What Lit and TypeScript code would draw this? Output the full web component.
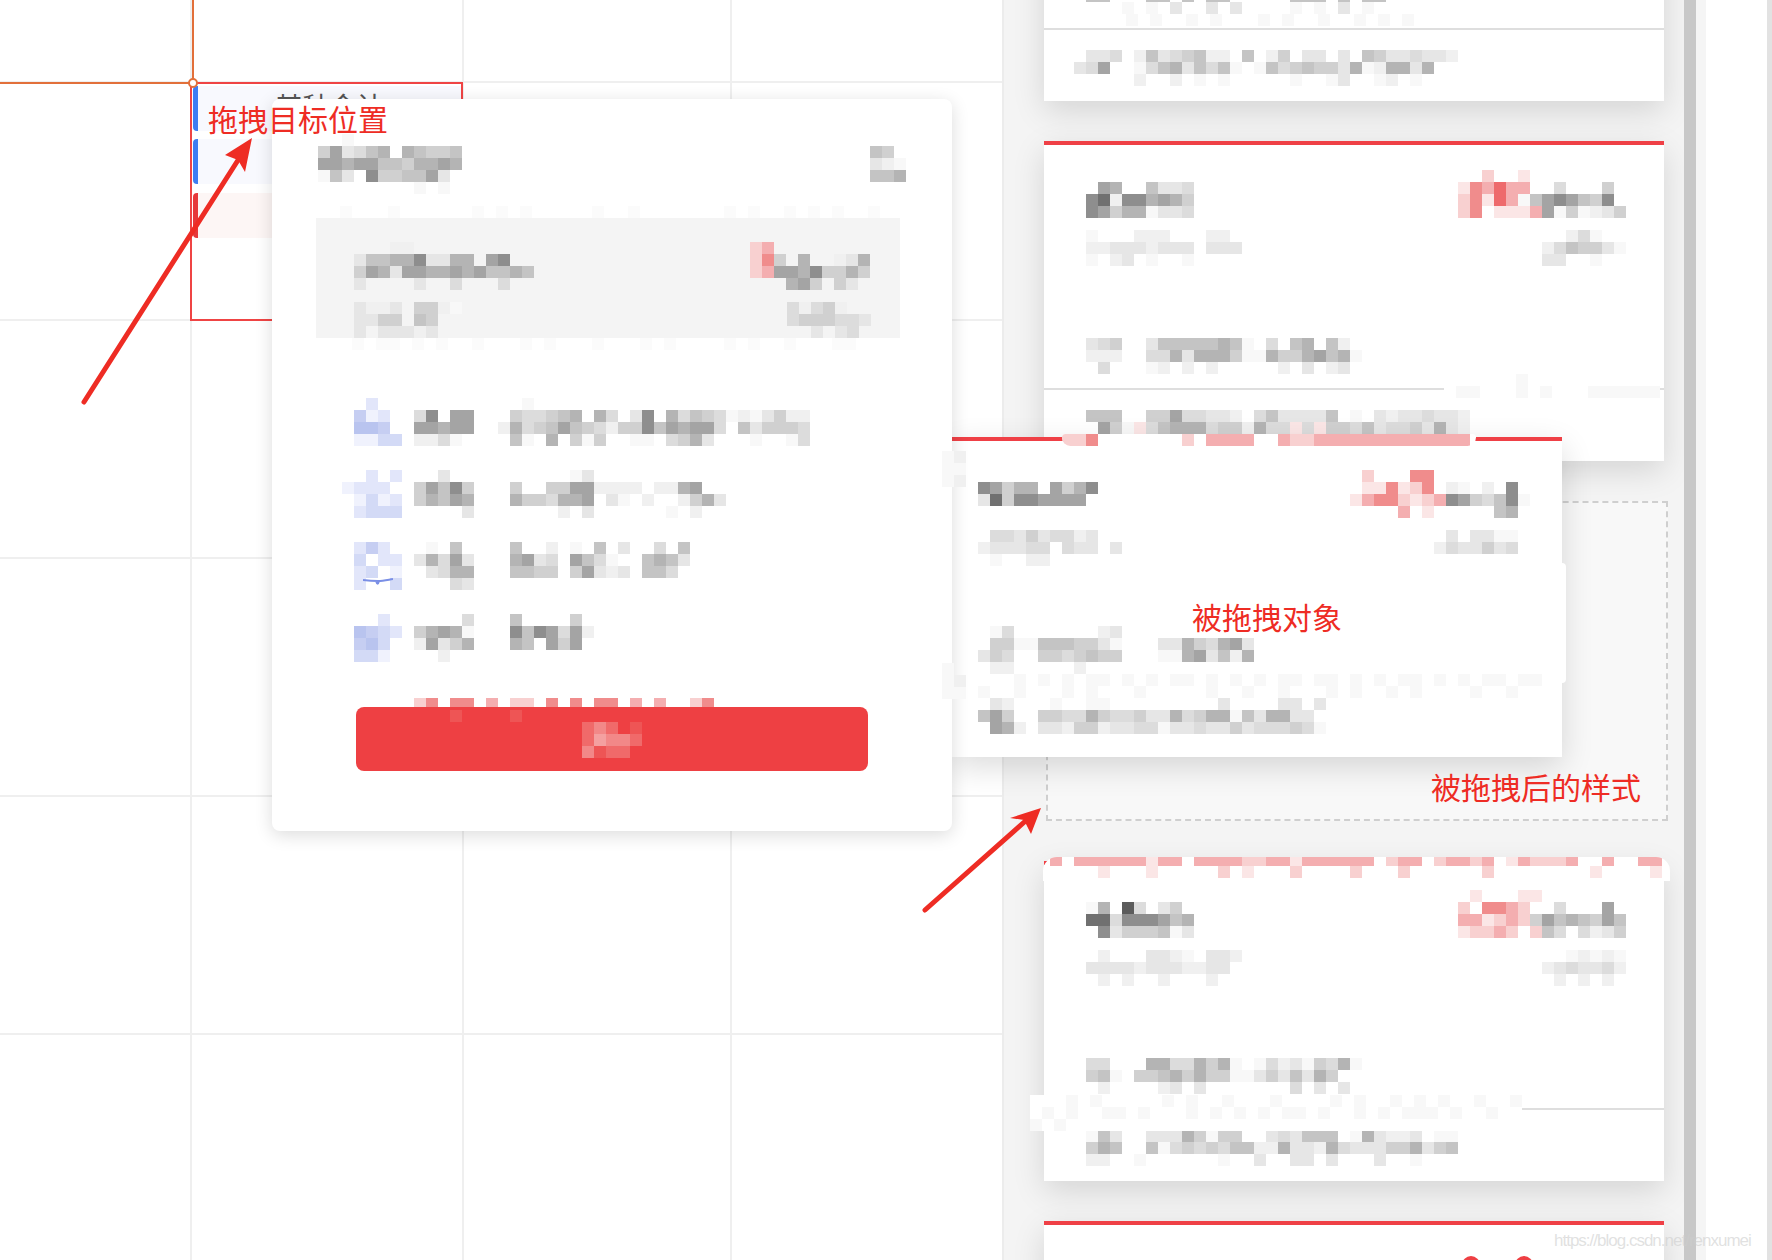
import { LitElement, html, css, svg, nothing } from "lit";
import { customElement } from "lit/decorators.js";

const PAL: Record<string, string> = {
  "0": "#fbfbfb",
  "1": "#f8f8f8", "2": "#f0f0f0", "3": "#e6e6e6", "4": "#dcdcdc", "5": "#d0d0d0",
  "6": "#c4c4c4", "7": "#b4b4b4", "8": "#a4a4a4", "9": "#8e8e8e", A: "#707070", B: "#5c5c5c",
  p: "#fbe6e6", q: "#f8d0d0", r: "#f4aeb0", s: "#f08c8c", t: "#ee6a6c",
  k: "#f0f2fd", l: "#e2e6fa", m: "#d3daf6", n: "#c6cef2", o: "#b9c4ef",
  u: "#f06a6a", v: "#f28888", w: "#f4a0a0", x: "#ee5555",
};

function mo(rows: string[]) {
  const cols = Math.max(...rows.map((r) => r.length));
  const rects: unknown[] = [];
  rows.forEach((r, y) => {
    [...r].forEach((c, x) => {
      const f = PAL[c];
      if (f) rects.push(svg`<rect x=${x * 12} y=${y * 12} width="12" height="12" fill=${f}></rect>`);
    });
  });
  return html`<svg class="mo" width=${cols * 12} height=${rows.length * 12} shape-rendering="crispEdges">${rects}</svg>`;
}

interface Smudge { l: number; t: number; rows: string[]; }
interface Card {
  title?: string[]; value?: string[]; subL?: string[]; subR?: string[];
  row3?: string[]; row4?: string[]; out?: boolean; smudges?: Smudge[]; dots?: boolean; band?: boolean;
}

const CARDS: Card[] = [
  {
    title: ["...", "...", "..."], value: ["..", "..", "..", ".."], subL: ["...", "...", "..."], subR: ["...", "...", "..."],
    row3: ["...", "66...66.6.66.....666.6.66", "...1.1.3..3.3....1.1.3.1"],
    row4: [".334.26345622.6.25.33.3.65334332", "348..146736461.164565537127737", ".....2..2.1.1.....1..13..12.1"],
    out: true,
    smudges: [{ l: 34, t: 233, rows: ["....1.1..1.1...1.1..1..1.1.1.."] }],
  },
  {
    title: [".87..6334", "9A2997875", "985771334"],
    value: ["..q..p........", "psrtrr..4...5.", "qsptr16898659.", "qs.pppr8151235"],
    subL: ["1...222...22.", "223332333.333", "1.23.1..1...."],
    subR: ["..241..", "2465531", "33..1.."],
    row3: ["345..366666761.4.67.62.", "222..447377751175578671", ".4...12.2.2.....2.3.23."],
    row4: ["666..55844332.4633336.1.32334332", ".851p467774552744p4p554634453732"],
    smudges: [{ l: 400, t: 233, rows: ["......1...........", ".11...1.1...111111"] }],
  },
  {},
  {
    title: ["17.B4.35.", "AA4999867", ".93555613"],
    value: [".p...pp.......", "q.ssrq..4...8.", "rrpqrq58676586", "pqqrq.q64.4235"],
    subL: [".2...3321.332", "333323332233.", ".2.2..2...2.."],
    subR: ["..12121", "2343342", ".2.2.2."],
    row3: ["44...77447571.142315471", "561.55675755113536375", ".2....23.3.......4.3.3"],
    row4: ["163..33375155..343666.173223.11", "576..61454546622733274333557356", "22..1......1..3..33.3...3..1"],
    band: true,
    smudges: [{ l: -14, t: 234, rows: ["...1.1.....1.1..1...1....1.1..1.1.1..1..1", ".1.1..11.1...1.1.1.1.11.1..1.1.111.1..1.", "1.1......................................"] }],
  },
  { dots: true },
];

const ROWS = [
  {
    icon: ["..l..", ".nkl.", ".oon.", ".kkmm"], label: [".....", "49.88", "88788", "2241."],
    val: ["..1", ".544567.74.39.746541213522", "2745686542559687884.635554", ".61.7.515..11.4573...1..14"],
  },
  {
    icon: ["..l.l", "klll.", ".kmkl", ".lmmm"], label: ["..3..", "58695", "57687", "....3"],
    val: ["......13", ".5..55882222.2278", ".7554778.31.2..2573", ".....2.3......1.2"],
  },
  {
    icon: [".lnl.", ".m.ll", ".lm.k", ".l..m"], label: [".1.6.", "37483", ".3477", "...43"],
    val: [".6..2.1.6.3..4.6", ".7834.8641..6763", ".6655.58323.664"], squiggle: true,
  },
  {
    icon: ["...l.", ".onml", ".nom.", ".mmk."], label: ["....4", "57871", "28357", "..2.."],
    val: [".6....5", ".9698482", ".76.858"],
  },
];

@customElement("app-root")
export class AppRoot extends LitElement {
  static styles = css`
    :host { display: block; width: 1772px; height: 1260px; position: relative; overflow: hidden; background: #fff;
      font-family: "Noto Sans CJK SC", "Liberation Sans", sans-serif; }
    .mo { display: block; flex: none; }
    .page { display: flex; height: 1260px; }
    .canvas { flex: 0 0 1002px; display: grid; grid-template-columns: 190px 272px 268px 272px;
      grid-template-rows: 81px 238px 238px 238px 238px 227px; }
    .cell { border-left: 2px solid #efefef; border-top: 2px solid #efefef; box-sizing: border-box; min-width: 0; }
    .cell.c0 { border-left: 0; }
    .cell.r0 { border-top: 0; }
    .target { position: relative; z-index: 1; margin: -1px -1px 0 -2px; height: 239px; box-sizing: border-box; border: 2px solid #ef4444; padding: 2px 0 0 1px;
      display: flex; flex-direction: column; gap: 8px; }
    .slot { height: 45px; flex: none; background: #f8f9fe; border-left: 5px solid #3d7df2; border-radius: 4px 0 0 4px; box-sizing: border-box;
      color: #555; font-size: 27px; line-height: 40px; text-align: center; overflow: hidden; }
    .slot.red { background: #fdf6f5; border-left-color: #e6393b; margin-top: 1px; }

    .panel { flex: 0 0 682px; box-sizing: border-box; background: #f4f4f4; border-left: 2px solid #ececec; padding-left: 40px;
      display: flex; flex-direction: column; gap: 40px; overflow: hidden; }
    .panel > :first-child { margin-top: -219px; }
    .card { flex: none; position: relative; width: 620px; height: 320px; box-sizing: border-box; background: #fff;
      padding: 0 38px 0 42px; box-shadow: 0 10px 30px rgba(0,0,0,.13); }
    .bar { height: 4px; margin: 0 -38px 25px -42px; background: #ef4046; }
    .head { display: flex; justify-content: space-between; align-items: flex-end; }
    .sub { display: flex; justify-content: space-between; margin-top: 12px; }
    .r3 { margin-top: 72px; }
    .line { height: 2px; background: #dedede; margin: 14px -38px 20px -42px; }
    .out { margin-left: -12px; }
    .smudge { position: absolute; background: #fff; }
    .dot { position: absolute; top: 35px; width: 18px; height: 18px; border-radius: 50%; background: #ee3f43; }
    .dot.a { left: 418px; }
    .dot.b { left: 471px; }
    .band { position: absolute; left: -1px; right: -6px; top: -4px; height: 24px; padding-left: 7px; background: #fff;
      border-radius: 14px 14px 0 0; overflow: hidden; }
    .band .mo { margin-top: -3px; }
    .placeholder { flex: none; width: 622px; height: 320px; box-sizing: border-box; margin-left: 2px; background: #f8f8f8; border: 2px dashed #cfcfcf; }
    .scroll { flex: 0 0 12px; background: #c8c8c8; }
    .track { flex: 0 0 10px; background: #f5f5f5; }
    .rest { flex: 1; border-right: 5px solid #e2e2e2; }

    .drag { position: absolute; left: 952px; top: 437px; width: 610px; height: 320px; box-sizing: border-box; background: #fff;
      padding: 0 44px 0 26px; box-shadow: 0 10px 30px rgba(0,0,0,.14); }
    .drag .bar { margin: 0 -44px 29px -26px; }
    .drag .r3 { margin-top: 60px; }
    .over { margin-right: -12px; }
    .dragband { position: absolute; left: 110px; top: -3px; width: 414px; height: 12px; background: #fff; border-radius: 6px 6px 14px 14px; overflow: hidden; }
    .dragedge { position: absolute; right: -4px; top: 126px; width: 4px; height: 120px; background: #fff; border-radius: 0 4px 4px 0; }

    .modal { position: absolute; z-index: 2; left: 272px; top: 99px; width: 680px; height: 732px; box-sizing: border-box; background: #fff; border-radius: 8px;
      box-shadow: 0 4px 18px rgba(0,0,0,.14); padding: 35px 46px 0 46px; }
    .mhead { display: flex; justify-content: space-between; }
    .box { position: relative; margin: 24px 6px 0 -2px; height: 120px; box-sizing: border-box; background: #f4f4f4; padding: 24px 30px 0 38px; }
    .boxline { display: flex; justify-content: space-between; }
    .boxline.l2 { margin-top: 12px; }
    .l2r { margin-right: -1px; }
    .fringe { position: absolute; left: 0; }
    .fringe.t { top: -12px; }
    .fringe.b { bottom: -12px; }
    .rows { display: flex; flex-direction: column; gap: 24px; margin: 60px 0 0 24px; }
    .row { display: flex; }
    .ico { position: relative; margin-right: 12px; }
    .lab { margin-right: 24px; }
    .squiggle { position: absolute; left: 21px; top: 36px; }
    .btn { position: relative; margin: 45px 38px 0 38px; height: 64px; background: #ee4043; border-radius: 8px; }
    .btn .pk { position: absolute; left: 58px; top: -9px; height: 9px; overflow: hidden; }
    .btn .dk { position: absolute; left: 58px; top: 3px; }
    .btn .tx { position: absolute; left: 226px; top: 15px; }
    .edge { position: absolute; left: 670px; }
    .edge.a { top: 352px; }
    .edge.b { top: 564px; }

    .note { position: absolute; z-index: 3; color: #ee2c24; font-size: 30px; line-height: 40px; white-space: nowrap; }
    .n1 { left: 208px; top: 98px; }
    .n2 { left: 1192px; top: 596px; }
    .n3 { left: 1431px; top: 766px; }
    .arrows { position: absolute; z-index: 3; left: 0; top: 0; pointer-events: none; }
    .guides { position: absolute; z-index: 1; left: 0; top: 0; pointer-events: none; }
    .mark { position: absolute; z-index: 3; left: 1554px; top: 1231px; font: 17px/20px "Liberation Sans", sans-serif; letter-spacing: -1px; color: rgba(205,205,205,.6); white-space: nowrap; }
  `;

  private card(d: Card) {
    return html`<div class="card">
      <div class="bar"></div>
      ${d.title ? html`<div class="head">${mo(d.title)}${mo(d.value!)}</div>
        <div class="sub">${mo(d.subL!)}${mo(d.subR!)}</div>
        <div class="r3">${mo(d.row3!)}</div>
        <div class="line"></div>
        <div class=${d.out ? "out" : ""}>${mo(d.row4!)}</div>` : nothing}
      ${d.smudges?.map((s) => html`<div class="smudge" style="left:${s.l}px;top:${s.t}px">${mo(s.rows)}</div>`)}
      ${d.band ? html`<div class="band">${mo([
        "r.rrrrrrprr.rrrrqqrrprrrrrr.qrr.qrrqr.prqqqr..r..rr",
        "....p...p.....q.p...q....q...q......q........p....p",
      ])}</div>` : nothing}
      ${d.dots ? html`<div class="dot a"></div><div class="dot b"></div>` : nothing}
    </div>`;
  }

  render() {
    const cells = Array.from({ length: 24 }, (_, i) => i);
    return html`
      <div class="page">
        <div class="canvas">
          ${cells.map((i) => html`<div class="cell ${i % 4 === 0 ? "c0" : ""} ${i < 4 ? "r0" : ""}">
            ${i === 5 ? html`<div class="target">
              <div class="slot">其种会计</div>
              <div class="slot"></div>
              <div class="slot red"></div>
            </div>` : nothing}
          </div>`)}
        </div>
        <div class="panel">
          ${this.card(CARDS[0])}
          ${this.card(CARDS[1])}
          <div class="placeholder"></div>
          ${this.card(CARDS[3])}
          ${this.card(CARDS[4])}
        </div>
        <div class="scroll"></div>
        <div class="track"></div>
        <div class="rest"></div>
      </div>

      <svg class="guides" width="200" height="90">
        <path d="M0 83H193V0" fill="none" stroke="#e2703a" stroke-width="2"></path>
        <circle cx="193" cy="83" r="4" fill="#fff" stroke="#e2703a" stroke-width="2"></circle>
      </svg>

      <div class="drag">
        <div class="bar"></div>
        <div class="head">${mo(["98577.8579", "3A5998888.", ".........."])}<div class="over">${mo([".q...ss........", ".ppspqs.21.2.9.", "prssqpqr9854691", "....r.p.....67."])}</div></div>
        <div class="sub">${mo([".443534423..", "233344.433.3", ".1..22......"])}${mo([".3.3311", "2433534", "......."])}</div>
        <div class="r3">${mo([
          ".14.......23",
          ".55116665531...33754783",
          "354..5545655...11783627",
          ".22.....2",
          "...1.1.1.11.1.1.11.1.1.1.11.11.1.1.11.1.1.11.11",
          "1..1...1.1...1.....1..1..1...1.1..1.1....1..1.",
          ".32...1..11.........3....33.3",
          "685..55447544533745771637733",
          ".872.332552334413343353444541",
        ])}</div>
        <div class="dragband">${mo(["qqs.......q.rrrr..rqqrrrrrrrrrrrrr"])}</div>
        <div class="dragedge"></div>
      </div>

      <div class="modal">
        <div class="mhead">
          ${mo(["..1.........", "583467.76556", "887886657787", "163.9556683", "........1.1."])}
          ${mo(["...", "65.", "321", "667", "..."])}
        </div>
        <div class="box">
          <div class="fringe t">${mo(["..0...0......0.0.0.....0..0.......0.0..0.0.0..0"])}</div>
          <div class="boxline">
            ${mo(["...22", "3667793377.89", "587388778786676", "3....3..4...4.."])}
            ${mo(["qr........", "qs5.7..237", "qr88795575", "...785.53."])}
          </div>
          <div class="boxline l2">
            ${mo(["3223.5521", "3355.65..", "3.33323.."])}
            <div class="l2r">${mo(["42452..", "4555443", "..3.34."])}</div>
          </div>
          <div class="fringe b">${mo(["...0.00.0.0..0...0.0...0...0.0....0.0..0...00"])}</div>
        </div>
        <div class="rows">
          ${ROWS.map((r) => html`<div class="row">
            <div class="ico">${mo(r.icon)}
              ${r.squiggle ? html`<svg class="squiggle" width="30" height="10" viewBox="0 0 30 10"><path d="M0 2C8 3 10 3 15 3C20 3 24 2 30 1M13 3C14 6 15 7 16 3" fill="none" stroke="#7a8fe6" stroke-width="2"></path></svg>` : nothing}
            </div>
            <div class="lab">${mo(r.label)}</div>
            ${mo(r.val)}
          </div>`)}
        </div>
        <div class="btn">
          <div class="pk">${mo(["qs.ss.r.qq.s.s.ss.r.r..qs"])}</div>
          <div class="dk">${mo(["...x....x"])}</div>
          <div class="tx">${mo(["uvu.x", "uwvvu", "vxuu."])}</div>
        </div>
        <div class="edge a">${mo(["12", "11", "12"])}</div>
        <div class="edge b">${mo(["1.", "12", "11"])}</div>
      </div>

      <svg class="arrows" width="1772" height="1260" viewBox="0 0 1772 1260">
        <path d="M84 402L240 157" stroke="#ee2c24" stroke-width="5" stroke-linecap="round" fill="none"></path>
        <path d="M252 138L245 172L238 160L225 155Z" fill="#ee2c24"></path>
        <path d="M925 910L1030 817" stroke="#ee2c24" stroke-width="5" stroke-linecap="round" fill="none"></path>
        <path d="M1041 808L1031 834L1024 820L1010 818Z" fill="#ee2c24"></path>
      </svg>
      <div class="note n1">拖拽目标位置</div>
      <div class="note n2">被拖拽对象</div>
      <div class="note n3">被拖拽后的样式</div>
      <div class="mark">https://blog.csdn.net/renxumei</div>
    `;
  }
}
